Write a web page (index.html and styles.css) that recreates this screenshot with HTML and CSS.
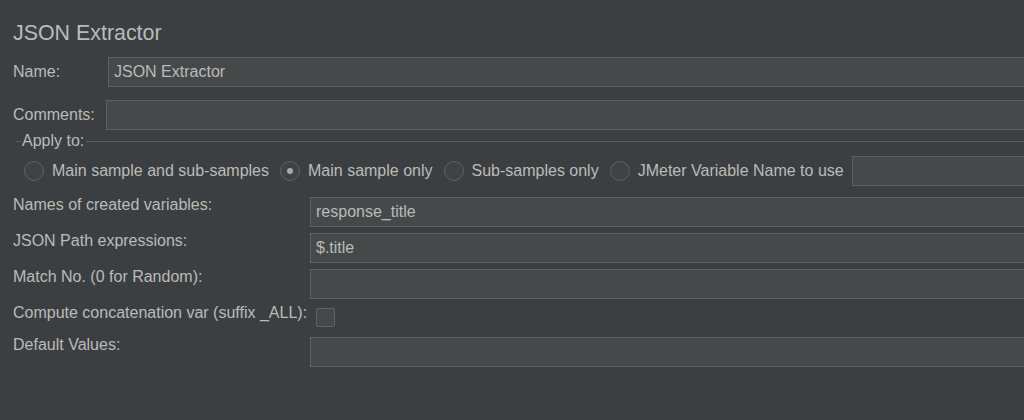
FILE: index.html
```html
<!DOCTYPE html>
<html>
<head>
<meta charset="utf-8">
<link rel="stylesheet" href="styles.css">
</head>
<body>
<div class="panel">
  <div class="title">JSON Extractor</div>
  <div class="row name-row">
    <span class="label">Name:</span>
    <div class="field">JSON Extractor</div>
  </div>
  <div class="row comments-row">
    <span class="label">Comments:</span>
    <div class="field"></div>
  </div>
  <div class="group">
    <div class="legend-line">
      <span class="dash"></span>
      <span class="legend">Apply to:</span>
      <span class="rule"></span>
    </div>
    <div class="radios">
      <span class="radio"></span><span class="rlabel">Main sample and sub-samples</span>
      <span class="radio checked"></span><span class="rlabel">Main sample only</span>
      <span class="radio"></span><span class="rlabel">Sub-samples only</span>
      <span class="radio"></span><span class="rlabel">JMeter Variable Name to use</span>
      <div class="field var-field"></div>
    </div>
  </div>
  <div class="grid">
    <span class="glabel">Names of created variables:</span>
    <div class="field">response_title</div>
    <span class="glabel">JSON Path expressions:</span>
    <div class="field">$.title</div>
    <span class="glabel">Match No. (0 for Random):</span>
    <div class="field"></div>
    <span class="glabel">Compute concatenation var (suffix _ALL):</span>
    <div class="cell"><span class="checkbox"></span></div>
    <span class="glabel">Default Values:</span>
    <div class="field"></div>
  </div>
</div>
</body>
</html>
```

FILE: styles.css
```css
html, body {
  margin: 0;
  padding: 0;
  background: #3c3f41;
  overflow: hidden;
}
body {
  width: 1024px;
  height: 420px;
  font-family: "Liberation Sans", Arial, sans-serif;
  font-size: 16px;
  color: #bbbbbb;
}
.panel {
  padding: 21px 0 0 13px;
}
.title {
  font-size: 21.4px;
  line-height: 24px;
  color: #bbbbbb;
}
.row {
  display: flex;
  align-items: center;
  height: 30px;
}
.name-row {
  margin-top: 12px;
}
.name-row .label {
  width: 95px;
  flex: none;
}
.comments-row {
  margin-top: 13px;
}
.comments-row .label {
  width: 93px;
  flex: none;
}
.field {
  box-sizing: border-box;
  height: 30px;
  line-height: 28px;
  background: #45494a;
  border: 1px solid #5e6162;
  padding: 0 5px;
  flex: 1;
  margin-right: -20px;
  white-space: nowrap;
  color: #bbbbbb;
}
.group {
  margin-top: 2px;
}
.legend-line {
  display: flex;
  align-items: center;
  height: 18px;
  line-height: 18px;
  margin-left: 3px;
}
.dash {
  width: 5px;
  height: 1px;
  background: #5a5e60;
  margin-right: 1px;
}
.legend {
  margin-right: 2px;
}
.rule {
  flex: 1;
  height: 1px;
  background: #5a5e60;
  margin-right: -20px;
}
.radios {
  display: flex;
  align-items: center;
  height: 30px;
  margin-top: 6px;
  padding-left: 11px;
  line-height: 18px;
}
.radio {
  box-sizing: border-box;
  width: 20px;
  height: 20px;
  border-radius: 50%;
  border: 1px solid #5e6263;
  background: #3f4345;
  flex: none;
  margin-right: 8px;
  display: flex;
  align-items: center;
  justify-content: center;
}
.radio.checked::after {
  content: "";
  width: 6px;
  height: 6px;
  border-radius: 50%;
  background: #a9a9a9;
}
.rlabel {
  margin-right: 11px;
  white-space: nowrap;
}
.rlabel:last-of-type {
  margin-right: 8px;
}
.var-field {
  flex: 1;
}
.grid {
  margin-top: 11px;
  display: grid;
  grid-template-columns: 297px 1fr;
  grid-template-rows: 30px 30px 30px 26px 30px;
  row-gap: 6px;
  align-items: start;
}
.glabel {
  line-height: 18px;
  margin-top: -1px;
  white-space: nowrap;
}
.cell {
  height: 26px;
}
.checkbox {
  display: block;
  box-sizing: border-box;
  width: 19px;
  height: 19px;
  margin: 3px 0 0 6px;
  border: 1px solid #5e6263;
  border-radius: 2px;
  background: #43484a;
}
```
